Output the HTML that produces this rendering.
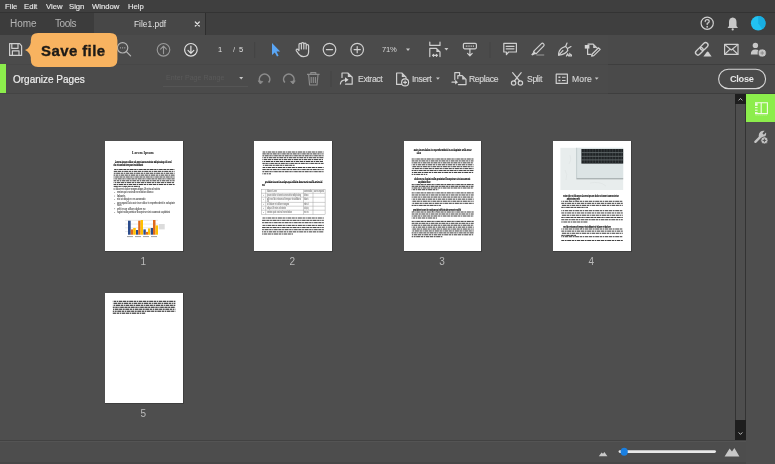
<!DOCTYPE html>
<html><head><meta charset="utf-8">
<style>
*{margin:0;padding:0;box-sizing:border-box}
html,body{width:775px;height:464px;overflow:hidden;-webkit-font-smoothing:antialiased;background:#4e4e4e;font-family:"Liberation Sans",sans-serif;color:#ddd}
.a{position:absolute;white-space:nowrap;will-change:transform}
#menu{left:0;top:0;width:775px;height:12px;background:#3f3f3f}
#menusep{left:0;top:12px;width:775px;height:1px;background:#333}
#tabs{left:0;top:13px;width:775px;height:22px;background:linear-gradient(to right,#3c3c3c 0,#3c3c3c 205px,#3f3f3f 205px)}
#acttab{left:94px;top:13px;width:111px;height:22px;background:#474747}
#tabsep{left:205px;top:13px;width:1px;height:22px;background:#2e2e2e}
#tb{left:0;top:35px;width:775px;height:29px;background:#4a4a4a}
#tbline{left:0;top:64px;width:775px;height:1px;background:linear-gradient(to right,#474747 0,#474747 608px,#3e3e3e 608px)}
#org{left:0;top:65px;width:775px;height:28px;background:#4a4a4a}
#orgline{left:0;top:93px;width:775px;height:1px;background:linear-gradient(to right,#444 0,#444 608px,#3e3e3e 608px)}
#content{left:0;top:94px;width:746px;height:346px;background:#4e4e4e}
#bottom{left:0;top:440px;width:746px;height:24px;background:#4d4d4d}
#bline{left:0;top:440px;width:746px;height:1px;background:#424242;box-shadow:0 1px 0 #545454}
#rpanel{left:746px;top:94px;width:29px;height:370px;background:#4e4e4e}
#rline{left:745px;top:94px;width:1px;height:346px;background:#333}
.mt{font-size:7.7px;line-height:7.7px;color:#e6e6e6;top:2.7px;-webkit-text-stroke:0.15px #e6e6e6}
.tt{font-size:10px;line-height:10px;color:#b4b4b4;top:18.7px}
.ot{font-size:8.6px;line-height:8.6px;color:#d4d4d4;top:75px;letter-spacing:-0.35px;-webkit-text-stroke:0.15px #d4d4d4}
svg{position:absolute;overflow:visible}
.ic{fill:none;stroke:#cfcfcf;stroke-width:1.2;stroke-linecap:round;stroke-linejoin:round}
.page{position:absolute;background:#fff;width:77.5px;height:110px;box-shadow:0.5px 0.5px 0 0.5px #3e3e3e}
.pg{position:absolute;filter:blur(0.25px)}
.pn{position:absolute;font-size:10px;line-height:10px;color:#bababa;text-align:center;width:20px}
</style></head><body>
<div class="a" id="menu"></div>
<div class="a" id="menusep"></div>
<div class="a" id="tabs"></div>
<div class="a" id="acttab"></div>
<div class="a" id="tabsep"></div>
<div class="a" id="tb"></div>
<div class="a" id="tbline"></div>
<div class="a" id="org"></div>
<div class="a" style="left:0;top:35px;width:608px;height:29px;background:#4b4b4b"></div>
<div class="a" style="left:0;top:65px;width:608px;height:28px;background:#4b4b4b"></div>
<div class="a" id="orgline"></div>
<div class="a" id="content"></div>
<div class="a" id="bottom"></div>
<div class="a" id="bline"></div>
<div class="a" style="left:0;top:462px;width:775px;height:2px;background:#474747"></div>
<div class="a" id="rpanel"></div>
<div class="a" id="rline"></div>

<!-- menu -->
<div class="a mt" style="left:4.5px">File</div>
<div class="a mt" style="left:24px">Edit</div>
<div class="a mt" style="left:46px">View</div>
<div class="a mt" style="left:69px">Sign</div>
<div class="a mt" style="left:92px">Window</div>
<div class="a mt" style="left:128px">Help</div>

<!-- tabs -->
<div class="a tt" style="left:10px">Home</div>
<div class="a tt" style="left:55.2px;letter-spacing:-0.45px">Tools</div>
<div class="a" style="left:134px;top:20.3px;font-size:8.4px;line-height:8.4px;color:#e0e0e0">File1.pdf</div>
<svg style="left:0;top:0" width="775" height="35">
  <path class="ic" d="M195.3 22 L199.3 26 M199.3 22 L195.3 26" stroke-width="1.05" style="stroke:#e0e0e0"/>
  <!-- help -->
  <circle class="ic" cx="707.2" cy="23.2" r="6.1" stroke-width="1.1"/>
  <path class="ic" d="M705.2 21.6 Q705.2 19.6 707.2 19.6 Q709.2 19.6 709.2 21.4 Q709.2 22.6 707.2 23.4 L707.2 24.6" stroke-width="1.5"/>
  <circle cx="707.2" cy="26.8" r="0.9" fill="#cfcfcf"/>
  <!-- bell -->
  <path d="M727.5 28 L738 28 L736.5 26 L736.5 22 Q736.5 18 732.7 17.6 Q729 18 729 22 L729 26 Z" fill="#c8c8c8"/>
  <circle cx="732.7" cy="29.4" r="1.1" fill="#c8c8c8"/>
  <!-- avatar -->
  <circle cx="758.2" cy="23.3" r="7.3" fill="#22c2f2"/>
  <path d="M758.2 23.3 L758.2 16 A7.3 7.3 0 0 1 762.4 29.3 Z" fill="#18aee2"/>
</svg>

<!-- toolbar -->
<svg style="left:0;top:0" width="775" height="64">
  <!-- save floppy -->
  <path class="ic" d="M9.6 43.6 L19.6 43.6 L21.6 45.8 L21.6 55.4 L9.6 55.4 Z"/>
  <path class="ic" d="M11.8 43.6 L11.8 48.4 L18 48.4 L18 43.6" stroke-width="1.1"/>
  <path class="ic" d="M12.4 55.4 L12.4 50.8 L19 50.8 L19 55.4" stroke-width="1.1"/>
  <!-- search -->
  <circle class="ic" cx="122.6" cy="47.8" r="5.2" style="stroke:#b4b4b4"/>
  <path class="ic" d="M126.4 51.6 L130.6 55.8" stroke-width="1.4" style="stroke:#b4b4b4"/>
  <circle cx="120.4" cy="47.8" r="0.6" fill="#b4b4b4"/><circle cx="122.6" cy="47.8" r="0.6" fill="#b4b4b4"/><circle cx="124.8" cy="47.8" r="0.6" fill="#b4b4b4"/>
  <!-- up (disabled) -->
  <g stroke="#9a9a9a" fill="none" stroke-width="1.1" stroke-linecap="round" stroke-linejoin="round">
   <circle cx="163.5" cy="49.8" r="6.3"/>
   <path d="M163.5 53.6 L163.5 46.4 M160.6 49.2 L163.5 46.2 L166.4 49.2"/>
  </g>
  <g stroke="#e0e0e0" fill="none" stroke-width="1.2" stroke-linecap="round" stroke-linejoin="round">
   <circle cx="190.9" cy="49.8" r="6.3"/>
   <path d="M190.9 46 L190.9 53.2 M188 50.4 L190.9 53.3 L193.8 50.4"/>
  </g>
  <!-- separator -->
  <path d="M254.6 42 L254.6 58" stroke="#444" stroke-width="1"/>
  <!-- cursor -->
  <path d="M272 43 L272 55 L274.8 52.4 L277 56.6 L278.6 55.8 L276.5 51.6 L280.2 51.4 Z" fill="#5aa6f5"/>
  <!-- hand -->
  <path class="ic" d="M299 50 L299 44.6 Q299 43.4 300.2 43.4 Q301.4 43.4 301.4 44.6 L301.4 49 M301.4 44 Q301.4 42.6 302.6 42.6 Q303.8 42.6 303.8 44 L303.8 49 M303.8 44.4 Q303.8 43.2 305 43.2 Q306.2 43.2 306.2 44.4 L306.2 49 M306.2 45.6 Q306.2 44.6 307.4 44.6 Q308.6 44.6 308.6 45.8 L308.6 52 Q308.6 56.6 303.6 56.6 Q300.4 56.6 298.8 54.2 L296.4 50.8 Q295.8 49.6 296.8 49.2 Q297.6 49 298.4 49.8 L299 50.6" stroke-width="1.05"/>
  <!-- zoom out / in -->
  <circle class="ic" cx="329.5" cy="49.6" r="6.3" stroke-width="1.2"/>
  <path class="ic" d="M326.4 49.6 L332.6 49.6" stroke-width="1.3"/>
  <circle class="ic" cx="357.2" cy="49.6" r="6.3" stroke-width="1.2"/>
  <path class="ic" d="M354.1 49.6 L360.3 49.6 M357.2 46.5 L357.2 52.7" stroke-width="1.3"/>
  <!-- dropdown arrows -->
  <path d="M406 48.6 L410 48.6 L408 51 Z" fill="#c8c8c8"/>
  <path d="M444.4 48 L448.4 48 L446.4 50.4 Z" fill="#c8c8c8"/>
  <!-- page fit -->
  <path class="ic" d="M429.8 42.2 L429.8 45.4 L440 45.4 L440 42.2" stroke-width="1.15"/>
  <path class="ic" d="M429.8 56.6 L429.8 48.4 L436.4 48.4 L440 52 L440 56.6" stroke-width="1.15"/>
  <path d="M436.4 48.6 L439.8 52 L436.4 52 Z" fill="#cfcfcf"/>
  <path class="ic" d="M432.6 55.4 L437.4 55.4 M433.6 54.4 L432.6 55.4 L433.6 56.4 M436.4 54.4 L437.4 55.4 L436.4 56.4" stroke-width="0.85"/>
  <!-- scroll/keyboard -->
  <rect class="ic" x="463.4" y="43.4" width="13" height="5.4" rx="1.2" stroke-width="1.2"/>
  <path d="M465.8 46.1 H474" stroke="#cfcfcf" stroke-width="1.2" stroke-dasharray="1 0.8"/>
  <path class="ic" d="M469.9 49 L469.9 55.6 M467.6 53.4 L469.9 55.8 L472.2 53.4" stroke-width="1.2"/>
  <!-- separator -->
  <path d="M490 42 L490 58" stroke="#444" stroke-width="1"/>
  <!-- comment -->
  <path class="ic" d="M503.8 43.4 L516.4 43.4 L516.4 52 L508.6 52 L506.4 54.6 L506.4 52 L503.8 52 Z" stroke-width="1.1"/>
  <path class="ic" d="M506.2 46.4 L514 46.4 M506.2 48.8 L514 48.8" stroke-width="1"/>
  <!-- highlighter -->
  <path class="ic" d="M533.6 51.4 L541.2 43.8 Q542.4 42.6 543.6 43.8 Q544.8 45 543.6 46.2 L536 53.8 Z" stroke-width="1.15"/>
  <path d="M533.6 51.6 L535.8 53.8 L532.4 55.4 L531.2 54.8 Z" fill="#cfcfcf"/>
  <path d="M536.4 55 L544.2 55" stroke="#8a8a8a" stroke-width="1.3"/>
  <!-- sign -->
  <path class="ic" d="M558.6 55.2 Q558.4 50.4 562.4 47.8 L565.6 46.4 Q567.8 48.2 567.8 50.4 Q565.4 54.6 558.6 55.2 Z" stroke-width="1.15"/>
  <path class="ic" d="M558.8 55 L562.2 51.4" stroke-width="1"/>
  <circle cx="562.8" cy="50.8" r="0.8" fill="#cfcfcf"/>
  <path class="ic" d="M565.6 46.4 L567 43 M567.6 48.6 L571 46.6" stroke-width="1.1"/>
  <path class="ic" d="M566.4 56 L567.6 53.8 L568.8 56 M567 55.2 L568.2 55.2 M569.8 56 L569.8 53.4 M569.8 54.6 Q571.8 54.2 571.4 56 L569.8 56" stroke-width="0.75"/>
  <!-- edit doc -->
  <path class="ic" d="M587.6 48.6 L587.6 54.4 L591 54.4 M588 44.2 L593.2 44.2 L597.2 48.2" stroke-width="1.15"/>
  <path d="M593.2 44.4 L596.4 48 L593.2 48 Z" fill="#cfcfcf"/>
  <rect x="584.8" y="45" width="4.6" height="3.6" fill="#d4d4d4"/>
  <path class="ic" d="M591.6 56.2 L592.2 54 L598.6 47.8 L600.2 49.4 L593.8 55.6 Z" stroke-width="1.1"/>
  <!-- link -->
  <g transform="rotate(-45 702.2 48.4)" fill="none" stroke="#cfcfcf" stroke-width="1.35">
    <rect x="693.8" y="46" width="8.8" height="4.8" rx="2.4"/>
    <rect x="700.6" y="46" width="8.8" height="4.8" rx="2.4"/>
  </g>
  <path d="M703.4 56.4 L706.6 52.2 Q707.6 51 708.6 52.2 L711.6 56.4 Z" fill="#cfcfcf"/>
  <!-- mail -->
  <rect class="ic" x="724.6" y="44.4" width="13.4" height="10" stroke-width="1.1"/>
  <path class="ic" d="M724.8 44.6 L731.3 50 L737.8 44.6 M724.8 54.2 L729.6 49.6 M737.8 54.2 L733 49.6" stroke-width="0.9"/>
  <!-- share user -->
  <circle cx="755.4" cy="45.4" r="2.7" fill="#c8c8c8"/>
  <path d="M750.8 54.4 Q750.8 49.4 755.4 49.4 Q757.8 49.4 759 50.8 L758.6 54.4 Z" fill="#c8c8c8"/>
  <circle cx="762.2" cy="53" r="4.1" fill="#c4c4c4" stroke="#4a4a4a" stroke-width="0.9"/>
  <path d="M760.4 53 L764 53 M762.2 51.2 L762.2 54.8" stroke="#8a8a8a" stroke-width="1"/>
</svg>
<div class="a" style="left:218px;top:46.2px;font-size:7.5px;line-height:7.5px;color:#e0e0e0">1</div>
<div class="a" style="left:232.8px;top:46.2px;font-size:7.5px;line-height:7.5px;color:#d0d0d0">/</div><div class="a" style="left:239px;top:46.2px;font-size:7.5px;line-height:7.5px;color:#e0e0e0">5</div>
<div class="a" style="left:381.6px;top:46.2px;font-size:7.6px;line-height:7.6px;color:#d8d8d8;letter-spacing:-0.2px">71%</div>

<!-- tooltip -->
<svg style="left:0;top:0" width="140" height="80">
  <path d="M38 33 L110 33 Q117.4 33 117.4 40.4 L117.4 59.6 Q117.4 67 110 67 L38 67 Q30.8 67 30.8 59.6 L30.8 57.6 Q30 52 25 50 Q30 48 30.8 42.4 L30.8 40.4 Q30.8 33 38 33 Z" fill="#f8b360"/>
</svg>
<div class="a" style="left:41px;top:43px;font-size:15px;line-height:15px;font-weight:bold;color:#1c1a17;letter-spacing:0.4px;-webkit-text-stroke:0.35px #1c1a17">Save file</div>

<!-- organize bar -->
<div class="a" style="left:0;top:64px;width:6.2px;height:29.4px;background:#8ced4c"></div>
<div class="a" style="left:12.8px;top:75.1px;font-size:10px;line-height:10px;color:#eeeeee;-webkit-text-stroke:0.2px #eeeeee;letter-spacing:0px">Organize Pages</div>
<div class="a" style="left:166px;top:75.2px;font-size:7.1px;line-height:7.1px;color:#5a5a5a;filter:blur(0.3px)">Enter Page Range</div>
<div class="a" style="left:163px;top:86.4px;width:85px;height:1px;background:#555"></div>
<svg style="left:0;top:0" width="775" height="94">
  <path d="M239.2 77 L243.2 77 L241.2 79.6 Z" fill="#c8c8c8"/>
  <!-- undo -->
  <path d="M260.6 82.6 A5.2 5.2 0 1 1 268.6 82.6" fill="none" stroke="#8c8c8c" stroke-width="1.6"/>
  <path d="M258.2 80.8 L260.4 84 L262.8 81.6 Z" fill="#8c8c8c" stroke="#8c8c8c" stroke-width="0.8"/>
  <!-- redo -->
  <path d="M284.8 82.6 A5.2 5.2 0 1 1 292.8 82.6" fill="none" stroke="#8c8c8c" stroke-width="1.6"/>
  <path d="M295.2 80.8 L293 84 L290.6 81.6 Z" fill="#8c8c8c" stroke="#8c8c8c" stroke-width="0.8"/>
  <!-- trash -->
  <path d="M307 74.4 L319.6 74.4 M310.8 74.2 L310.8 72.6 L315.8 72.6 L315.8 74.2 M308.6 74.6 L309.6 85 L317 85 L318 74.6 M311.2 77 L311.2 83 M313.3 77 L313.3 83 M315.4 77 L315.4 83" fill="none" stroke="#8c8c8c" stroke-width="1.15" stroke-linejoin="round"/>
  <path d="M331 71 L331 87" stroke="#444" stroke-width="1"/>
  <!-- extract -->
  <path class="ic" d="M342 77.4 L342 73 L347.8 73 L352.2 77.2 L352.2 84.2 L345.6 84.2" stroke-width="1.15"/>
  <path d="M347.8 73.2 L351.8 77 L347.8 77 Z" fill="#cfcfcf"/>
  <path class="ic" d="M340.4 84 Q340.8 80 345.4 79.8" stroke-width="1.3"/>
  <path d="M345 77.2 L348.6 79.8 L345 82.4 Z" fill="#d8d8d8"/>
  <!-- insert -->
  <path class="ic" d="M401.4 84.4 L396.6 84.4 L396.6 73 L401.8 73 L406 77.2 L406 78.6" stroke-width="1.15"/>
  <path d="M401.8 73.2 L405.6 77 L401.8 77 Z" fill="#cfcfcf"/>
  <circle cx="405.1" cy="82.4" r="3.5" fill="#4a4a4a" stroke="#d4d4d4" stroke-width="1.15"/>
  <path d="M403.2 82.4 L407 82.4 M405.1 80.5 L405.1 84.3" stroke="#d4d4d4" stroke-width="1.1"/>
  <path d="M436 77.4 L439.8 77.4 L437.9 79.8 Z" fill="#c8c8c8"/>
  <!-- replace -->
  <path class="ic" d="M454.8 79.6 L454.8 72.6 L459.6 72.6 L459.6 75.2" stroke-width="1.1"/>
  <path class="ic" d="M457.8 78.6 L457.8 75.6 L462.2 75.6 L466 79.4 L466 84.6 L458.4 84.6" stroke-width="1.15"/>
  <path d="M462.2 75.8 L465.8 79.4 L462.2 79.4 Z" fill="#cfcfcf"/>
  <path class="ic" d="M452 82.2 L455.8 82.2" stroke-width="1.2"/>
  <path d="M455.2 79.8 L458 82.2 L455.2 84.6 Z" fill="#d4d4d4"/>
  <!-- split scissors -->
  <path class="ic" d="M512.6 72.6 L519.6 81 M521.2 72.6 L514.4 81" stroke-width="1.2"/>
  <circle class="ic" cx="513.6" cy="83" r="2.2" stroke-width="1.15"/>
  <circle class="ic" cx="520.4" cy="83" r="2.2" stroke-width="1.15"/>
  <!-- more -->
  <rect class="ic" x="556.2" y="74.2" width="11.2" height="9.2" stroke-width="1.15"/>
  <path d="M558.4 77.3 L560.4 77.3 M558.4 80.5 L560.4 80.5" stroke="#cfcfcf" stroke-width="1.5"/>
  <path d="M562 77.3 L565.6 77.3 M562 80.5 L565.6 80.5" stroke="#cfcfcf" stroke-width="1"/>
  <path d="M594.8 77.4 L598.6 77.4 L596.7 79.8 Z" fill="#c8c8c8"/>
  <!-- close button -->
  <rect x="718.6" y="69.2" width="47" height="19.4" rx="9.7" fill="none" stroke="#d6d6d6" stroke-width="1.1"/>
</svg>
<div class="a ot" style="left:357.6px">Extract</div>
<div class="a ot" style="left:411.8px">Insert</div>
<div class="a ot" style="left:469px">Replace</div>
<div class="a ot" style="left:526.6px">Split</div>
<div class="a ot" style="left:571.6px;letter-spacing:0.1px">More</div>
<div class="a" style="left:730.4px;top:74.6px;font-size:9.2px;line-height:9.2px;color:#e6e6e6;font-weight:bold;letter-spacing:-0.3px">Close</div>

<!-- scrollbar -->
<div class="a" style="left:735px;top:94px;width:1px;height:346px;background:#333"></div><div class="a" style="left:745px;top:94px;width:1px;height:346px;background:#333"></div>
<div class="a" style="left:735px;top:94px;width:11px;height:10px;background:#1e1e1e"></div>
<div class="a" style="left:735px;top:420px;width:11px;height:20px;background:#1e1e1e"></div>
<svg style="left:0;top:0" width="775" height="464">
  <path d="M738.6 100.4 L740.5 98.4 L742.4 100.4" fill="none" stroke="#bbb" stroke-width="1"/>
  <path d="M738.6 432.4 L740.5 434.4 L742.4 432.4" fill="none" stroke="#bbb" stroke-width="1"/>
</svg>

<!-- right panel -->
<div class="a" style="left:746px;top:94px;width:29px;height:28px;background:#8ced4c"></div>
<svg style="left:0;top:0" width="775" height="464">
  <path d="M755 102.8 L767.4 102.8 L767.4 113.6 L755 113.6" fill="none" stroke="#f2fbe8" stroke-width="1.1"/>
  <path d="M761.2 102.8 L761.2 113.6" stroke="#f2fbe8" stroke-width="1.1"/>
  <rect x="755" y="103.2" width="2.6" height="2.6" fill="#f2fbe8"/>
  <path d="M755 107.6 L757.6 107.6 M755 110.2 L757.6 110.2 M755 112.6 L757.6 112.6" stroke="#f2fbe8" stroke-width="1"/>
  <path d="M755.6 115.4 H767" stroke="#d8f5c0" stroke-width="0.5" stroke-dasharray="1 1"/>
  <!-- wrench -->
  <path d="M755.4 141.8 L760.6 136.6" stroke="#c4c4c4" stroke-width="2.4" stroke-linecap="round"/>
  <path d="M759.2 138 Q757.8 134.2 760.4 131.8 Q762.4 130.2 764.6 130.8 L762.4 133.2 L763.8 134.8 L766 132.6 Q766.6 135 765 136.6 Q763 138.6 760.4 137.6 Z" fill="#c4c4c4"/>
  <circle cx="764.4" cy="140.4" r="3.6" fill="#c4c4c4" stroke="#4d4d4d" stroke-width="0.8"/>
  <path d="M762.6 140.4 L766.2 140.4 M764.4 138.6 L764.4 142.2" stroke="#555" stroke-width="1"/>
</svg>

<!-- bottom bar -->
<svg style="left:0;top:0" width="775" height="464">
  <path d="M598.8 456.2 L601.6 452.4 L603 453.8 L604.4 452 L607.4 456.2 Z" fill="#c8c8c8"/>
  <path d="M620 451.6 L714.6 451.6" stroke="#e8e8e8" stroke-width="2.8" stroke-linecap="round"/>
  <ellipse cx="624.2" cy="451.8" rx="3.6" ry="4" fill="#1a7fe0"/>
  <path d="M724.6 456.4 L729.6 448.6 L732 451.4 L734.4 448 L739.4 456.4 Z" fill="#c8c8c8"/>
</svg>

<!-- pages -->
<div class="page" style="left:105px;top:141px"></div>
<div class="page" style="left:254px;top:141px"></div>
<div class="page" style="left:403.7px;top:141px"></div>
<div class="page" style="left:553px;top:141px"></div>
<div class="page" style="left:105px;top:293px"></div>
<!--PAGES-->
<svg class="pg" style="left:105px;top:141px" width="78" height="110" viewBox="105 141 78 110"><text x="142.85" y="154.3" text-anchor="middle" font-family="Liberation Serif" font-weight="bold" font-size="4.3" textLength="21.7" lengthAdjust="spacingAndGlyphs" fill="#111">Lorem Ipsum</text><path d="M114.90 162.30H171.50" stroke="#111" stroke-width="0.9" stroke-opacity="0.55" stroke-dasharray="3.2 0.6 1.8 0.6 4.1 0.6 2.4 0.6 1.3 0.6 3.6 0.6" stroke-dashoffset="1.4"/><text x="114.90" y="163.15" textLength="56.60" lengthAdjust="spacingAndGlyphs" font-family="Liberation Sans" font-size="2.85" font-weight="bold" fill="#000" fill-opacity="1.0">Lorem ipsum dolor sit amet consectetur adipiscing elit sed</text><path d="M113.60 165.10H143.20" stroke="#111" stroke-width="0.9" stroke-opacity="0.55" stroke-dasharray="3.2 0.6 1.8 0.6 4.1 0.6 2.4 0.6 1.3 0.6 3.6 0.6" stroke-dashoffset="10.1"/><text x="113.60" y="165.95" textLength="29.60" lengthAdjust="spacingAndGlyphs" font-family="Liberation Sans" font-size="2.85" font-weight="bold" fill="#000" fill-opacity="1.0">do eiusmod tempor incididunt</text><g stroke="#111" stroke-width="0.9" stroke-opacity="0.88" stroke-dasharray="3.2 0.6 1.8 0.6 4.1 0.6 2.4 0.6 1.3 0.6 3.6 0.6"><path d="M113.60 169.50H174.60" stroke-dashoffset="10.3"/><path d="M113.60 171.38H174.60" stroke-dashoffset="15.6"/><path d="M113.60 173.26H174.60" stroke-dashoffset="3.6"/><path d="M113.60 175.13H174.60" stroke-dashoffset="8.9"/><path d="M113.60 177.01H174.60" stroke-dashoffset="14.2"/><path d="M113.60 178.89H174.60" stroke-dashoffset="2.2"/><path d="M113.60 180.77H174.60" stroke-dashoffset="7.5"/><path d="M113.60 182.64H174.60" stroke-dashoffset="12.8"/><path d="M113.60 184.52H174.60" stroke-dashoffset="0.8"/><path d="M113.60 186.40H140.00" stroke-dashoffset="6.1"/></g><text x="113.60" y="189.75" textLength="46.40" lengthAdjust="spacingAndGlyphs" font-family="Liberation Sans" font-size="2.55" font-weight="bold" fill="#000" fill-opacity="0.75">ut labore et dolore magna aliqua Ut enim ad minim</text><circle cx="114.7" cy="192.4" r="0.45" fill="#444"/><text x="117.00" y="193.25" textLength="36.40" lengthAdjust="spacingAndGlyphs" font-family="Liberation Sans" font-size="2.55" font-weight="bold" fill="#000" fill-opacity="0.75">veniam quis nostrud exercitation ullamco</text><circle cx="114.7" cy="196" r="0.45" fill="#444"/><text x="117.00" y="196.85" textLength="8.40" lengthAdjust="spacingAndGlyphs" font-family="Liberation Sans" font-size="2.55" font-weight="bold" fill="#000" fill-opacity="0.75">laboris</text><circle cx="114.7" cy="199.6" r="0.45" fill="#444"/><text x="117.00" y="200.45" textLength="28.40" lengthAdjust="spacingAndGlyphs" font-family="Liberation Sans" font-size="2.55" font-weight="bold" fill="#000" fill-opacity="0.75">nisi ut aliquip ex ea commodo</text><circle cx="114.7" cy="203.4" r="0.45" fill="#444"/><text x="117.00" y="204.25" textLength="57.80" lengthAdjust="spacingAndGlyphs" font-family="Liberation Sans" font-size="2.55" font-weight="bold" fill="#000" fill-opacity="0.75">consequat Duis aute irure dolor in reprehenderit in voluptate</text><circle cx="114.7" cy="208.7" r="0.45" fill="#444"/><text x="117.00" y="209.55" textLength="28.40" lengthAdjust="spacingAndGlyphs" font-family="Liberation Sans" font-size="2.55" font-weight="bold" fill="#000" fill-opacity="0.75">velit esse cillum dolore eu</text><circle cx="114.7" cy="212.4" r="0.45" fill="#444"/><text x="117.00" y="213.25" textLength="53.00" lengthAdjust="spacingAndGlyphs" font-family="Liberation Sans" font-size="2.55" font-weight="bold" fill="#000" fill-opacity="0.75">fugiat nulla pariatur Excepteur sint occaecat cupidatat</text><text x="117.00" y="206.25" textLength="4.40" lengthAdjust="spacingAndGlyphs" font-family="Liberation Sans" font-size="2.55" font-weight="bold" fill="#000" fill-opacity="0.75">non</text><path d="M125 220.4H158" stroke="#ccc" stroke-width="0.4"/><path d="M125 224.1H158" stroke="#ccc" stroke-width="0.4"/><path d="M125 227.8H158" stroke="#ccc" stroke-width="0.4"/><path d="M125 231.5H158" stroke="#ccc" stroke-width="0.4"/><rect x="128" y="220.7" width="2.7" height="14.00" fill="#2b4c8c"/><rect x="130.7" y="229.4" width="2.5" height="5.30" fill="#e06a1b"/><rect x="133.2" y="228" width="2.6" height="6.70" fill="#ffc000"/><rect x="136" y="230" width="2.2" height="4.70" fill="#2b4c8c"/><rect x="138.2" y="220.7" width="2.4" height="14.00" fill="#e06a1b"/><rect x="140.6" y="220" width="2.4" height="14.70" fill="#ffc000"/><rect x="143.4" y="229.4" width="2.4" height="5.30" fill="#2b4c8c"/><rect x="145.8" y="232" width="2.2" height="2.70" fill="#e06a1b"/><rect x="148" y="228.4" width="2.2" height="6.30" fill="#ffc000"/><rect x="150.7" y="228" width="2.3" height="6.70" fill="#2b4c8c"/><rect x="153" y="220" width="2.5" height="14.70" fill="#e06a1b"/><rect x="155.5" y="225.4" width="2.5" height="9.30" fill="#ffc000"/><rect x="158.7" y="224" width="6" height="5.4" fill="#dcdcdc"/><path d="M127 236.6H133 M135 236.6H141 M143 236.6H149 M151 236.6H157" stroke="#777" stroke-width="0.7"/></svg>
<svg class="pg" style="left:254px;top:141px" width="78" height="110" viewBox="254 141 78 110"><g stroke="#111" stroke-width="0.9" stroke-opacity="0.88" stroke-dasharray="3.2 0.6 1.8 0.6 4.1 0.6 2.4 0.6 1.3 0.6 3.6 0.6"><path d="M262.40 152.00H323.60" stroke-dashoffset="10.7"/><path d="M262.40 153.90H323.60" stroke-dashoffset="16.0"/><path d="M262.40 155.80H323.60" stroke-dashoffset="4.0"/><path d="M262.40 157.70H323.60" stroke-dashoffset="9.3"/><path d="M262.40 159.60H323.60" stroke-dashoffset="14.6"/><path d="M262.40 161.50H323.60" stroke-dashoffset="2.6"/><path d="M262.40 163.40H323.60" stroke-dashoffset="7.9"/><path d="M262.40 165.30H294.60" stroke-dashoffset="13.2"/></g><g stroke="#111" stroke-width="0.9" stroke-opacity="0.88" stroke-dasharray="3.2 0.6 1.8 0.6 4.1 0.6 2.4 0.6 1.3 0.6 3.6 0.6"><path d="M262.40 167.50H323.60" stroke-dashoffset="10.7"/><path d="M262.40 169.60H323.60" stroke-dashoffset="16.0"/><path d="M262.40 171.70H323.60" stroke-dashoffset="4.0"/><path d="M262.40 173.80H271.00" stroke-dashoffset="9.3"/></g><path d="M265.00 182.50H322.40" stroke="#111" stroke-width="0.9" stroke-opacity="0.55" stroke-dasharray="3.2 0.6 1.8 0.6 4.1 0.6 2.4 0.6 1.3 0.6 3.6 0.6" stroke-dashoffset="12.1"/><text x="265.00" y="183.35" textLength="57.40" lengthAdjust="spacingAndGlyphs" font-family="Liberation Sans" font-size="2.85" font-weight="bold" fill="#000" fill-opacity="1.0">proident sunt in culpa qui officia deserunt mollit anim id</text><path d="M262.00 185.20H265.00" stroke="#111" stroke-width="0.9" stroke-opacity="0.55" stroke-dasharray="3.2 0.6 1.8 0.6 4.1 0.6 2.4 0.6 1.3 0.6 3.6 0.6" stroke-dashoffset="3.2"/><text x="262.00" y="186.05" textLength="3.00" lengthAdjust="spacingAndGlyphs" font-family="Liberation Sans" font-size="2.85" font-weight="bold" fill="#000" fill-opacity="1.0">est</text><g fill="none" stroke="#9a9a9a" stroke-width="0.45"><rect x="261.3" y="189.6" width="63.8" height="25.1"/><path d="M265.7 189.6V214.7 M303.5 189.6V214.7 M313 189.6V214.7 M261.3 193.3H325.1 M261.3 197.2H325.1 M261.3 202.4H325.1 M261.3 206.2H325.1 M261.3 210.2H325.1"/></g><text x="267.00" y="192.25" textLength="10.00" lengthAdjust="spacingAndGlyphs" font-family="Liberation Sans" font-size="2.55" font-weight="bold" fill="#000" fill-opacity="0.55">laborum Lorem</text><text x="267.00" y="196.05" textLength="34.00" lengthAdjust="spacingAndGlyphs" font-family="Liberation Sans" font-size="2.55" font-weight="bold" fill="#000" fill-opacity="0.55">ipsum dolor sit amet consectetur adipiscing</text><text x="267.00" y="200.05" textLength="34.00" lengthAdjust="spacingAndGlyphs" font-family="Liberation Sans" font-size="2.55" font-weight="bold" fill="#000" fill-opacity="0.55">elit sed do eiusmod tempor incididunt</text><text x="267.00" y="205.05" textLength="22.00" lengthAdjust="spacingAndGlyphs" font-family="Liberation Sans" font-size="2.55" font-weight="bold" fill="#000" fill-opacity="0.55">ut labore et dolore magna</text><text x="267.00" y="209.05" textLength="19.00" lengthAdjust="spacingAndGlyphs" font-family="Liberation Sans" font-size="2.55" font-weight="bold" fill="#000" fill-opacity="0.55">aliqua Ut enim ad minim</text><text x="267.00" y="213.15" textLength="25.00" lengthAdjust="spacingAndGlyphs" font-family="Liberation Sans" font-size="2.55" font-weight="bold" fill="#000" fill-opacity="0.55">veniam quis nostrud exercitation</text><text x="304.00" y="196.05" textLength="4.50" lengthAdjust="spacingAndGlyphs" font-family="Liberation Sans" font-size="2.55" font-weight="bold" fill="#000" fill-opacity="0.55">ullamco</text><circle cx="263.5" cy="195.2" r="0.4" fill="#555"/><text x="304.00" y="200.05" textLength="4.50" lengthAdjust="spacingAndGlyphs" font-family="Liberation Sans" font-size="2.55" font-weight="bold" fill="#000" fill-opacity="0.55">laboris</text><circle cx="263.5" cy="199.2" r="0.4" fill="#555"/><text x="304.00" y="205.05" textLength="4.50" lengthAdjust="spacingAndGlyphs" font-family="Liberation Sans" font-size="2.55" font-weight="bold" fill="#000" fill-opacity="0.55">nisi</text><circle cx="263.5" cy="204.2" r="0.4" fill="#555"/><text x="304.00" y="209.05" textLength="4.50" lengthAdjust="spacingAndGlyphs" font-family="Liberation Sans" font-size="2.55" font-weight="bold" fill="#000" fill-opacity="0.55">ut aliquip</text><circle cx="263.5" cy="208.2" r="0.4" fill="#555"/><text x="304.00" y="213.15" textLength="4.50" lengthAdjust="spacingAndGlyphs" font-family="Liberation Sans" font-size="2.55" font-weight="bold" fill="#000" fill-opacity="0.55">ex ea</text><circle cx="263.5" cy="212.3" r="0.4" fill="#555"/><text x="304.00" y="192.25" textLength="8.00" lengthAdjust="spacingAndGlyphs" font-family="Liberation Sans" font-size="2.55" font-weight="bold" fill="#000" fill-opacity="0.55">commodo</text><text x="314.00" y="192.25" textLength="10.00" lengthAdjust="spacingAndGlyphs" font-family="Liberation Sans" font-size="2.55" font-weight="bold" fill="#000" fill-opacity="0.55">consequat</text><text x="267.00" y="201.75" textLength="2.00" lengthAdjust="spacingAndGlyphs" font-family="Liberation Sans" font-size="2.55" font-weight="bold" fill="#000" fill-opacity="0.55">Duis</text><g stroke="#111" stroke-width="0.9" stroke-opacity="0.88" stroke-dasharray="3.2 0.6 1.8 0.6 4.1 0.6 2.4 0.6 1.3 0.6 3.6 0.6"><path d="M262.00 218.00H323.80" stroke-dashoffset="10.4"/><path d="M262.00 220.35H323.80" stroke-dashoffset="15.7"/><path d="M262.00 222.70H323.80" stroke-dashoffset="3.7"/></g><g stroke="#111" stroke-width="0.9" stroke-opacity="0.88" stroke-dasharray="3.2 0.6 1.8 0.6 4.1 0.6 2.4 0.6 1.3 0.6 3.6 0.6"><path d="M262.00 225.40H323.80" stroke-dashoffset="10.4"/><path d="M262.00 227.55H323.80" stroke-dashoffset="15.7"/><path d="M262.00 229.70H323.80" stroke-dashoffset="3.7"/><path d="M262.00 231.85H323.80" stroke-dashoffset="9.0"/><path d="M262.00 234.00H293.00" stroke-dashoffset="14.3"/></g></svg>
<svg class="pg" style="left:403.7px;top:141px" width="78" height="110" viewBox="403.7 141 78 110"><path d="M413.50 150.30H471.40" stroke="#111" stroke-width="0.9" stroke-opacity="0.55" stroke-dasharray="3.2 0.6 1.8 0.6 4.1 0.6 2.4 0.6 1.3 0.6 3.6 0.6" stroke-dashoffset="16.1"/><text x="413.50" y="151.15" textLength="57.90" lengthAdjust="spacingAndGlyphs" font-family="Liberation Sans" font-size="2.85" font-weight="bold" fill="#000" fill-opacity="1.0">aute irure dolor in reprehenderit in voluptate velit esse</text><path d="M416.50 153.30H420.70" stroke="#111" stroke-width="0.9" stroke-opacity="0.55" stroke-dasharray="3.2 0.6 1.8 0.6 4.1 0.6 2.4 0.6 1.3 0.6 3.6 0.6" stroke-dashoffset="8.1"/><text x="416.50" y="154.15" textLength="4.20" lengthAdjust="spacingAndGlyphs" font-family="Liberation Sans" font-size="2.85" font-weight="bold" fill="#000" fill-opacity="1.0">cillum</text><g stroke="#111" stroke-width="0.9" stroke-opacity="0.88" stroke-dasharray="3.2 0.6 1.8 0.6 4.1 0.6 2.4 0.6 1.3 0.6 3.6 0.6"><path d="M411.40 159.00H473.20" stroke-dashoffset="11.2"/><path d="M411.40 160.93H473.20" stroke-dashoffset="16.5"/><path d="M411.40 162.85H473.20" stroke-dashoffset="4.5"/><path d="M411.40 164.78H473.20" stroke-dashoffset="9.8"/><path d="M411.40 166.70H473.20" stroke-dashoffset="15.1"/><path d="M411.40 168.62H473.20" stroke-dashoffset="3.1"/><path d="M411.40 170.55H473.20" stroke-dashoffset="8.4"/><path d="M411.40 172.47H473.20" stroke-dashoffset="13.7"/><path d="M411.40 174.40H427.00" stroke-dashoffset="1.7"/></g><path d="M414.00 179.20H470.00" stroke="#111" stroke-width="0.9" stroke-opacity="0.55" stroke-dasharray="3.2 0.6 1.8 0.6 4.1 0.6 2.4 0.6 1.3 0.6 3.6 0.6" stroke-dashoffset="1.9"/><text x="414.00" y="180.05" textLength="56.00" lengthAdjust="spacingAndGlyphs" font-family="Liberation Sans" font-size="2.85" font-weight="bold" fill="#000" fill-opacity="1.0">dolore eu fugiat nulla pariatur Excepteur sint occaecat</text><path d="M417.70 182.20H430.30" stroke="#111" stroke-width="0.9" stroke-opacity="0.55" stroke-dasharray="3.2 0.6 1.8 0.6 4.1 0.6 2.4 0.6 1.3 0.6 3.6 0.6" stroke-dashoffset="11.2"/><text x="417.70" y="183.05" textLength="12.60" lengthAdjust="spacingAndGlyphs" font-family="Liberation Sans" font-size="2.85" font-weight="bold" fill="#000" fill-opacity="1.0">cupidatat non</text><g stroke="#111" stroke-width="0.9" stroke-opacity="0.88" stroke-dasharray="3.2 0.6 1.8 0.6 4.1 0.6 2.4 0.6 1.3 0.6 3.6 0.6"><path d="M411.40 184.60H473.20" stroke-dashoffset="11.2"/><path d="M411.40 186.30H473.20" stroke-dashoffset="16.5"/><path d="M411.40 188.00H473.20" stroke-dashoffset="4.5"/><path d="M411.40 189.70H438.00" stroke-dashoffset="9.8"/></g><g stroke="#111" stroke-width="0.9" stroke-opacity="0.88" stroke-dasharray="3.2 0.6 1.8 0.6 4.1 0.6 2.4 0.6 1.3 0.6 3.6 0.6"><path d="M411.40 192.90H473.40" stroke-dashoffset="11.2"/><path d="M411.40 194.98H473.40" stroke-dashoffset="16.5"/><path d="M411.40 197.07H473.40" stroke-dashoffset="4.5"/><path d="M411.40 199.15H473.40" stroke-dashoffset="9.8"/><path d="M411.40 201.23H473.40" stroke-dashoffset="15.1"/><path d="M411.40 203.32H473.40" stroke-dashoffset="3.1"/><path d="M411.40 205.40H440.70" stroke-dashoffset="8.4"/></g><path d="M412.70 209.80H460.70" stroke="#111" stroke-width="0.9" stroke-opacity="0.55" stroke-dasharray="3.2 0.6 1.8 0.6 4.1 0.6 2.4 0.6 1.3 0.6 3.6 0.6" stroke-dashoffset="10.3"/><text x="412.70" y="210.65" textLength="48.00" lengthAdjust="spacingAndGlyphs" font-family="Liberation Sans" font-size="2.85" font-weight="bold" fill="#000" fill-opacity="1.0">proident sunt in culpa qui officia deserunt mollit</text><g stroke="#111" stroke-width="0.9" stroke-opacity="0.88" stroke-dasharray="3.2 0.6 1.8 0.6 4.1 0.6 2.4 0.6 1.3 0.6 3.6 0.6"><path d="M411.40 212.00H473.40" stroke-dashoffset="11.2"/><path d="M411.40 214.00H473.40" stroke-dashoffset="16.5"/><path d="M411.40 216.00H473.40" stroke-dashoffset="4.5"/><path d="M411.40 218.00H436.70" stroke-dashoffset="9.8"/></g><g stroke="#111" stroke-width="0.9" stroke-opacity="0.88" stroke-dasharray="3.2 0.6 1.8 0.6 4.1 0.6 2.4 0.6 1.3 0.6 3.6 0.6"><path d="M411.40 221.40H473.40" stroke-dashoffset="11.2"/><path d="M411.40 223.31H473.40" stroke-dashoffset="16.5"/><path d="M411.40 225.22H473.40" stroke-dashoffset="4.5"/><path d="M411.40 227.14H473.40" stroke-dashoffset="9.8"/><path d="M411.40 229.05H473.40" stroke-dashoffset="15.1"/><path d="M411.40 230.96H473.40" stroke-dashoffset="3.1"/><path d="M411.40 232.88H473.40" stroke-dashoffset="8.4"/><path d="M411.40 234.79H473.40" stroke-dashoffset="13.7"/><path d="M411.40 236.70H442.00" stroke-dashoffset="1.7"/></g></svg>
<svg class="pg" style="left:553px;top:141px" width="78" height="110" viewBox="553 141 78 110"><rect x="560.4" y="147.8" width="62.8" height="42.2" fill="#e8eded"/><rect x="576.4" y="147.8" width="46.8" height="30.8" fill="#dce4e5"/><path d="M576.4 178.8H623.2" stroke="#8d9697" stroke-width="0.9"/><path d="M576.6 147.8V178.6" stroke="#b9c3c4" stroke-width="0.7"/><path d="M565 170 Q568 174 566 180 M590 183 Q600 181 606 186 M570 155 Q572 160 569 164" stroke="#dde2e2" stroke-width="0.6" fill="none"/><rect x="581.4" y="149" width="41.8" height="14.6" fill="#1f2325"/><g stroke="#8e9698" stroke-width="0.55"><path d="M581.4 152.6H623.2"/><path d="M581.4 156.3H623.2"/><path d="M581.4 159.9H623.2"/></g><g stroke="#5e6668" stroke-width="0.4"><path d="M584.2 149V163.6"/><path d="M587.1 149V163.6"/><path d="M589.9 149V163.6"/><path d="M592.8 149V163.6"/><path d="M595.6 149V163.6"/><path d="M598.5 149V163.6"/><path d="M601.3 149V163.6"/><path d="M604.2 149V163.6"/><path d="M607.0 149V163.6"/><path d="M609.9 149V163.6"/><path d="M612.7 149V163.6"/><path d="M615.6 149V163.6"/><path d="M618.4 149V163.6"/><path d="M621.2 149V163.6"/></g><path d="M563.30 196.00H618.80" stroke="#111" stroke-width="0.9" stroke-opacity="0.55" stroke-dasharray="3.2 0.6 1.8 0.6 4.1 0.6 2.4 0.6 1.3 0.6 3.6 0.6" stroke-dashoffset="2.1"/><text x="563.30" y="196.85" textLength="55.50" lengthAdjust="spacingAndGlyphs" font-family="Liberation Sans" font-size="2.85" font-weight="bold" fill="#000" fill-opacity="1.0">anim id est laborum Lorem ipsum dolor sit amet consectetur</text><path d="M566.70 198.70H580.00" stroke="#111" stroke-width="0.9" stroke-opacity="0.55" stroke-dasharray="3.2 0.6 1.8 0.6 4.1 0.6 2.4 0.6 1.3 0.6 3.6 0.6" stroke-dashoffset="10.5"/><text x="566.70" y="199.55" textLength="13.30" lengthAdjust="spacingAndGlyphs" font-family="Liberation Sans" font-size="2.85" font-weight="bold" fill="#000" fill-opacity="1.0">adipiscing elit</text><g stroke="#111" stroke-width="0.9" stroke-opacity="0.88" stroke-dasharray="3.2 0.6 1.8 0.6 4.1 0.6 2.4 0.6 1.3 0.6 3.6 0.6"><path d="M561.30 201.30H622.80" stroke-dashoffset="12.3"/><path d="M561.30 203.33H622.80" stroke-dashoffset="0.3"/><path d="M561.30 205.37H622.80" stroke-dashoffset="5.6"/><path d="M561.30 207.40H588.00" stroke-dashoffset="10.9"/></g><g stroke="#111" stroke-width="0.9" stroke-opacity="0.88" stroke-dasharray="3.2 0.6 1.8 0.6 4.1 0.6 2.4 0.6 1.3 0.6 3.6 0.6"><path d="M561.30 210.70H622.80" stroke-dashoffset="12.3"/><path d="M561.30 212.96H622.80" stroke-dashoffset="0.3"/><path d="M561.30 215.22H622.80" stroke-dashoffset="5.6"/><path d="M561.30 217.48H622.80" stroke-dashoffset="10.9"/><path d="M561.30 219.74H622.80" stroke-dashoffset="16.2"/><path d="M561.30 222.00H588.00" stroke-dashoffset="4.2"/></g><path d="M563.30 226.70H610.70" stroke="#111" stroke-width="0.9" stroke-opacity="0.55" stroke-dasharray="3.2 0.6 1.8 0.6 4.1 0.6 2.4 0.6 1.3 0.6 3.6 0.6" stroke-dashoffset="10.8"/><text x="563.30" y="227.55" textLength="47.40" lengthAdjust="spacingAndGlyphs" font-family="Liberation Sans" font-size="2.85" font-weight="bold" fill="#000" fill-opacity="1.0">sed do eiusmod tempor incididunt ut labore et dolore</text><g stroke="#111" stroke-width="0.9" stroke-opacity="0.88" stroke-dasharray="3.2 0.6 1.8 0.6 4.1 0.6 2.4 0.6 1.3 0.6 3.6 0.6"><path d="M561.30 229.00H622.80" stroke-dashoffset="12.3"/><path d="M561.30 231.13H622.80" stroke-dashoffset="0.3"/><path d="M561.30 233.27H622.80" stroke-dashoffset="5.6"/><path d="M561.30 235.40H576.00" stroke-dashoffset="10.9"/></g><g stroke="#111" stroke-width="0.9" stroke-opacity="0.88" stroke-dasharray="3.2 0.6 1.8 0.6 4.1 0.6 2.4 0.6 1.3 0.6 3.6 0.6"><path d="M561.30 236.70H622.80" stroke-dashoffset="12.3"/><path d="M561.30 240.50H622.80" stroke-dashoffset="0.3"/></g></svg>
<svg class="pg" style="left:105px;top:293px" width="78" height="110" viewBox="105 293 78 110"><g stroke="#111" stroke-width="1.0" stroke-opacity="0.95" stroke-dasharray="3.2 0.6 1.8 0.6 4.1 0.6 2.4 0.6 1.3 0.6 3.6 0.6"><path d="M112.80 301.30H175.40" stroke-dashoffset="9.8"/><path d="M112.80 303.28H175.40" stroke-dashoffset="15.1"/><path d="M112.80 305.27H175.40" stroke-dashoffset="3.1"/><path d="M112.80 307.25H175.40" stroke-dashoffset="8.4"/><path d="M112.80 309.23H175.40" stroke-dashoffset="13.7"/><path d="M112.80 311.22H175.40" stroke-dashoffset="1.7"/><path d="M112.80 313.20H145.40" stroke-dashoffset="7.0"/></g></svg>
<!--/PAGES-->
<div class="pn" style="left:133.4px;top:257.2px">1</div>
<div class="pn" style="left:282.4px;top:257.2px">2</div>
<div class="pn" style="left:432px;top:257.2px">3</div>
<div class="pn" style="left:581.4px;top:257.2px">4</div>
<div class="pn" style="left:133.4px;top:409px">5</div>

</body></html>
